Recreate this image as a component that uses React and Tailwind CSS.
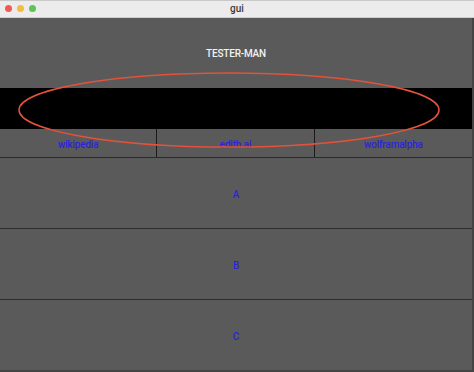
import React from 'react';

export default function App() {
    const font = { fontFamily: 'Roboto, "Liberation Sans", Arial, sans-serif' };

    return (
        <div className="w-[474px] h-[372px] flex flex-col bg-[#5a5a5a] overflow-hidden" style={font}>
            {/* title bar */}
            <div className="h-[18px] shrink-0 relative flex items-center justify-center bg-[#ececec] border-t border-[#c8c8c8] border-b border-b-[#d0d0d0]">
                <div className="absolute left-[5px] top-[4px] flex gap-[5px]">
                    <span className="w-[7px] h-[7px] rounded-full bg-[#ee5b56]" />
                    <span className="w-[7px] h-[7px] rounded-full bg-[#f4bd3f]" />
                    <span className="w-[7px] h-[7px] rounded-full bg-[#5fc454]" />
                </div>
                <span className="text-[10px] font-medium text-[#3c3c3c] leading-none">gui</span>
            </div>

            <div className="flex-1 flex flex-col relative border-r-2 border-b-2 border-[#444] text-[10px] font-medium tracking-[-0.2px]">
                <div className="h-[70px] flex items-center justify-center text-[#f2f2f2]">
                    TESTER-MAN
                </div>
                <div className="h-[41px] bg-black" />
                <div className="h-[29px] grid grid-cols-3 border-b border-[#2a2a2a] text-[#2b24dc]">
                    <div className="flex items-center justify-center pt-[2px] border-r border-[#1a1a1a]">wikipedia</div>
                    <div className="flex items-center justify-center pt-[2px] border-r border-[#1a1a1a]">edith.ai</div>
                    <div className="flex items-center justify-center pt-[2px]">wolframalpha</div>
                </div>
                <div className="h-[71px] flex items-center justify-center pt-[3px] text-[#2b24dc] border-b border-[#2e2e2e]">A</div>
                <div className="h-[71px] flex items-center justify-center pt-[2px] text-[#2b24dc] border-b border-[#2e2e2e]">B</div>
                <div className="flex-1 flex items-center justify-center pt-[2px] text-[#2b24dc]">C</div>

                {/* red annotation ellipse */}
                <svg className="absolute left-0 top-0 pointer-events-none" width="474" height="160">
                    <ellipse cx="229" cy="92" rx="210" ry="37" fill="none" stroke="#e2523c" strokeWidth="1.5" />
                </svg>
            </div>
        </div>
    );
}
